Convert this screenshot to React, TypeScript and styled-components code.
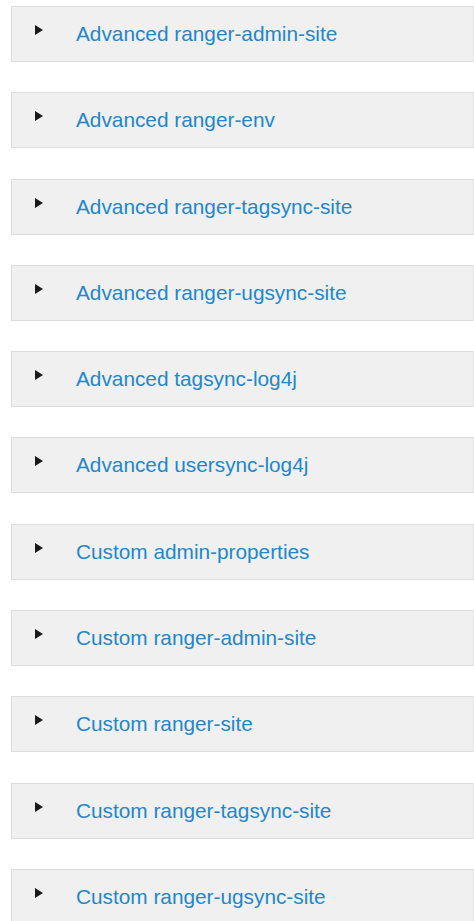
import React from "react";
import styled, { createGlobalStyle } from "styled-components";

const GlobalStyle = createGlobalStyle`
  html, body {
    margin: 0;
    padding: 0;
    background: #ffffff;
    font-family: "Liberation Sans", Arial, sans-serif;
  }
`;

const List = styled.div`
  display: flex;
  flex-direction: column;
  gap: 30.3px;
  padding: 6px 0 0 11px;
`;

const Panel = styled.div`
  display: flex;
  align-items: center;
  height: 54px;
  background: #f0f0f0;
  border: 1px solid #dddddd;
  border-right-color: #e4e4e4;
  box-sizing: content-box;
  cursor: pointer;
`;

const Caret = styled.span`
  flex: none;
  width: 0;
  height: 0;
  margin: 0 33px 0 23px;
  border-top: 5px solid transparent;
  border-bottom: 5px solid transparent;
  border-left: 8px solid #1a1a1a;
  position: relative;
  top: -4px;
`;

const Title = styled.span`
  color: #2387c9;
  font-size: 20.8px;
  line-height: 24px;
`;

const sections = [
  "Advanced ranger-admin-site",
  "Advanced ranger-env",
  "Advanced ranger-tagsync-site",
  "Advanced ranger-ugsync-site",
  "Advanced tagsync-log4j",
  "Advanced usersync-log4j",
  "Custom admin-properties",
  "Custom ranger-admin-site",
  "Custom ranger-site",
  "Custom ranger-tagsync-site",
  "Custom ranger-ugsync-site",
];

export default function App() {
  return (
    <>
      <GlobalStyle />
      <List>
        {sections.map((name) => (
          <Panel key={name}>
            <Caret />
            <Title>{name}</Title>
          </Panel>
        ))}
      </List>
    </>
  );
}
